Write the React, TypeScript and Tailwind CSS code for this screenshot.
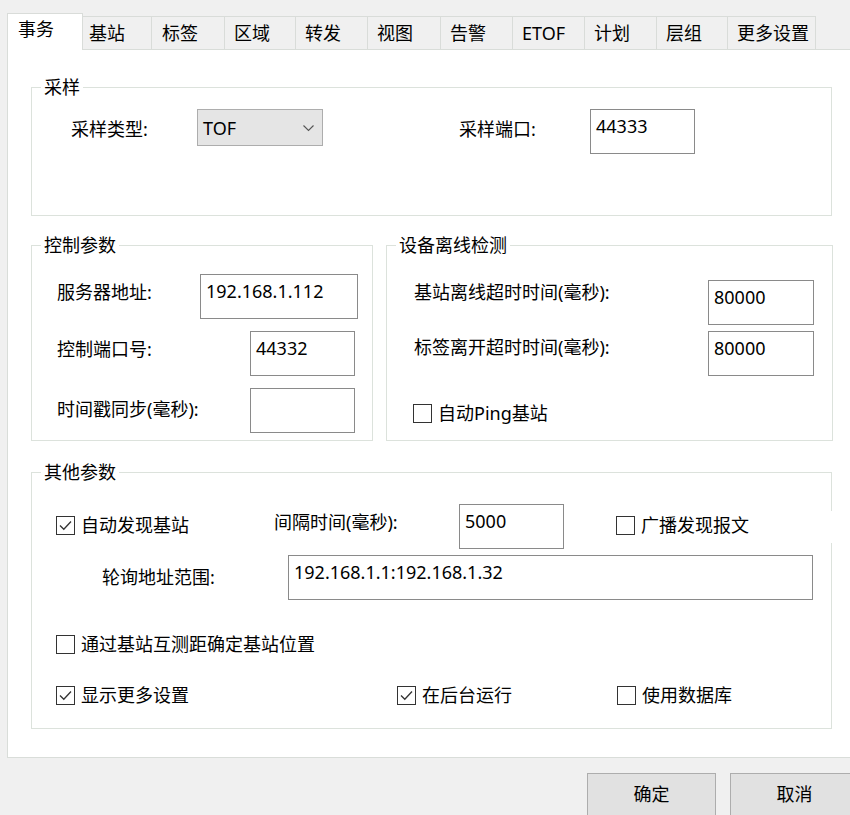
import type { ReactElement, ReactNode } from "react";

const tabs = [
  { label: "基站", w: "w-[69px] pl-[6px]" },
  { label: "标签", w: "w-[73px] pl-[10px]" },
  { label: "区域", w: "w-[71px] pl-[9px]" },
  { label: "转发", w: "w-[72px] pl-[9px]" },
  { label: "视图", w: "w-[73px] pl-[9px]" },
  { label: "告警", w: "w-[72px] pl-[9px]" },
  { label: "ETOF", w: "w-[72px] pl-[9px]" },
  { label: "计划", w: "w-[72px] pl-[9px]" },
  { label: "层组", w: "w-[71px] pl-[9px]" },
  { label: "更多设置", w: "w-[88px] pl-[9px]" },
];

function Group({
  title,
  className,
  children,
}: {
  title: string;
  className: string;
  children: ReactNode;
}): ReactElement {
  return (
    <div className={`relative shrink-0 border border-[#dce2dc] ${className}`}>
      <span className="absolute -top-[13px] left-[9px] bg-white px-[3px] leading-[24px]">
        {title}
      </span>
      {children}
    </div>
  );
}

function Field({ value, className }: { value?: string; className: string }): ReactElement {
  return (
    <div
      className={`h-[45px] shrink-0 border border-[#8a8a8a] bg-white pl-[5px] pt-[4px] leading-[24px] ${className}`}
    >
      {value}
    </div>
  );
}

function Check({ label, checked }: { label: string; checked?: boolean }): ReactElement {
  return (
    <div className="flex h-[24px] items-center gap-[6px]">
      <span className="flex h-[19px] w-[19px] shrink-0 items-center justify-center border border-[#333]">
        {checked && (
          <svg width="15" height="15" viewBox="0 0 15 15">
            <path d="M2 7.5 L5.8 11.2 L13 3.5" fill="none" stroke="#333" strokeWidth="1.3" />
          </svg>
        )}
      </span>
      <span className="whitespace-nowrap">{label}</span>
    </div>
  );
}

export default function App(): ReactElement {
  return (
    <div className="h-[815px] w-[850px] overflow-hidden bg-[#f0f0f0] font-['Noto_Sans','Noto_Sans_CJK_SC',sans-serif] text-[18px] leading-[24px] text-black">
      {/* tab strip */}
      <div className="flex items-end pl-[7px] pt-[13px]">
        <div className="relative z-10 -mb-px h-[37px] w-[76px] shrink-0 border border-b-0 border-[#d9dcd9] bg-white pl-[10px] pt-[3px]">
          事务
        </div>
        {tabs.map((t) => (
          <div
            key={t.label}
            className={`h-[33px] shrink-0 whitespace-nowrap border-t border-r border-[#d9dcd9] bg-[#f0f0f0] pt-[4px] ${t.w}`}
          >
            {t.label}
          </div>
        ))}
      </div>

      {/* tab page */}
      <div className="ml-[7px] h-[709px] w-[860px] border border-[#d9ddd9] bg-white pl-[23px] pt-[37px]">
        <Group title="采样" className="h-[129px] w-[801px]">
          <div className="flex items-start pt-[21px]">
            <span className="ml-[39px] mt-[8px] w-[126px] shrink-0">采样类型:</span>
            <div className="flex h-[37px] w-[126px] shrink-0 items-center justify-between border border-[#adadad] bg-[#e5e5e5] pl-[5px] pr-[7px]">
              <span>TOF</span>
              <svg width="13" height="8" viewBox="0 0 13 8">
                <polyline points="1.5,1.5 6.5,6.5 11.5,1.5" fill="none" stroke="#555" strokeWidth="1.1" />
              </svg>
            </div>
            <span className="ml-[136px] mt-[8px] w-[131px] shrink-0">采样端口:</span>
            <Field value="44333" className="w-[105px]" />
          </div>
        </Group>

        <div className="mt-[29px] flex gap-[13px]">
          <Group title="控制参数" className="h-[196px] w-[342px]">
            <div className="mt-[28px] flex items-start pl-[25px]">
              <span className="mt-[6px] w-[143px] shrink-0">服务器地址:</span>
              <Field value="192.168.1.112" className="w-[158px]" />
            </div>
            <div className="mt-[12px] flex items-start pl-[25px]">
              <span className="mt-[6px] w-[193px] shrink-0">控制端口号:</span>
              <Field value="44332" className="w-[105px]" />
            </div>
            <div className="mt-[12px] flex items-start pl-[25px]">
              <span className="mt-[9px] w-[193px] shrink-0 whitespace-nowrap">时间戳同步(毫秒):</span>
              <Field className="w-[105px]" />
            </div>
          </Group>

          <Group title="设备离线检测" className="h-[196px] w-[447px]">
            <div className="mt-[34px] flex items-start pl-[27px]">
              <span className="w-[294px] shrink-0 whitespace-nowrap">基站离线超时时间(毫秒):</span>
              <Field value="80000" className="w-[106px]" />
            </div>
            <div className="mt-[6px] flex items-start pl-[27px]">
              <span className="mt-[4px] w-[294px] shrink-0 whitespace-nowrap">标签离开超时时间(毫秒):</span>
              <Field value="80000" className="w-[106px]" />
            </div>
            <div className="mt-[25px] pl-[26px]">
              <Check label="自动Ping基站" />
            </div>
          </Group>
        </div>

        <Group title="其他参数" className="mt-[31px] h-[257px] w-[801px]">
          <span className="absolute -right-[2px] top-[38px] h-[32px] w-[3px] bg-white" />
          <div className="mt-[31px] flex items-start pl-[24px]">
            <div className="mt-[9px] w-[218px] shrink-0">
              <Check label="自动发现基站" checked />
            </div>
            <span className="mt-[6px] w-[185px] shrink-0 whitespace-nowrap">间隔时间(毫秒):</span>
            <Field value="5000" className="w-[105px]" />
            <div className="ml-[52px] mt-[9px]">
              <Check label="广播发现报文" />
            </div>
          </div>
          <div className="mt-[6px] flex items-start pl-[70px]">
            <span className="mt-[10px] w-[186px] shrink-0">轮询地址范围:</span>
            <Field value="192.168.1.1:192.168.1.32" className="w-[525px]" />
          </div>
          <div className="mt-[32px] pl-[24px]">
            <Check label="通过基站互测距确定基站位置" />
          </div>
          <div className="mt-[27px] flex pl-[24px]">
            <div className="w-[341px] shrink-0">
              <Check label="显示更多设置" checked />
            </div>
            <div className="w-[220px] shrink-0">
              <Check label="在后台运行" checked />
            </div>
            <Check label="使用数据库" />
          </div>
        </Group>
      </div>

      {/* dialog buttons */}
      <div className="mt-[15px] flex gap-[14px] pl-[587px]">
        <div className="flex h-[44px] w-[129px] shrink-0 items-center justify-center border border-[#adadad] bg-[#e1e1e1] pb-[3px]">
          确定
        </div>
        <div className="flex h-[44px] w-[129px] shrink-0 items-center justify-center border border-[#adadad] bg-[#e1e1e1] pb-[3px]">
          取消
        </div>
      </div>
    </div>
  );
}
